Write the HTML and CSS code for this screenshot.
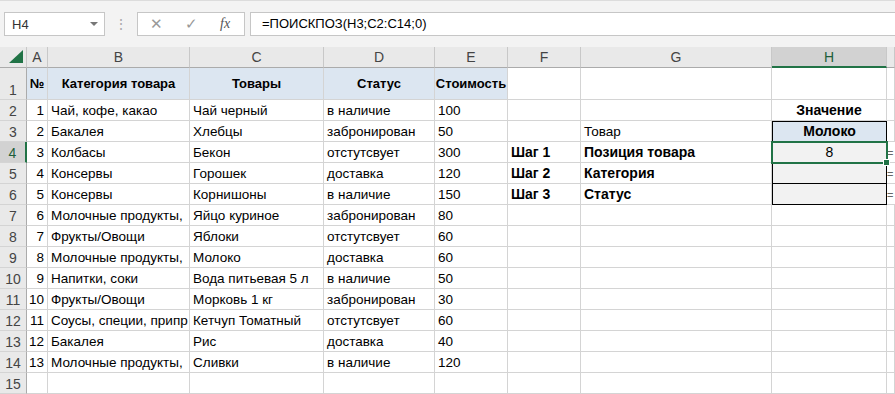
FILE: index.html
```html
<!DOCTYPE html>
<html lang="ru">
<head>
    <meta charset="UTF-8">
    <title>ПОИСКПОЗ</title>
    <link rel="stylesheet" href="styles.css">
</head>
<body>

    <div class="toolbar">
        <div class="namebox">
            <span>H4</span>
            <span class="arrow"></span>
        </div>
        <div class="dots">⋮</div>
        <div class="fxbox">
            <span class="btn">✕</span>
            <span class="btn">✓</span>
            <span class="fx">fx</span>
        </div>
        <div class="formula">=ПОИСКПОЗ(H3;C2:C14;0)</div>
    </div>

    <div class="sheet">
        <div class="row heads">
            <div class="corner"><span class="tri"></span></div>
            <div>A</div><div>B</div><div>C</div><div>D</div><div>E</div><div>F</div><div>G</div><div class="sel-col">H</div><div></div>
        </div>

        <div class="row tall">
            <div class="rn">1</div>
            <div class="hd">№</div>
            <div class="hd">Категория товара</div>
            <div class="hd">Товары</div>
            <div class="hd">Статус</div>
            <div class="hd">Стоимость</div>
            <div></div><div></div><div></div><div></div>
        </div>

        <div class="row">
            <div class="rn">2</div><div class="num">1</div><div>Чай, кофе, какао</div><div>Чай черный</div><div>в наличие</div><div>100</div>
            <div></div><div></div><div class="b center">Значение</div><div></div>
        </div>
        <div class="row">
            <div class="rn">3</div><div class="num">2</div><div>Бакалея</div><div>Хлебцы</div><div>забронирован</div><div>50</div>
            <div></div><div>Товар</div><div class="b center box blue">Молоко</div><div></div>
        </div>
        <div class="row">
            <div class="rn sel-row">4</div><div class="num">3</div><div>Колбасы</div><div>Бекон</div><div>отстутсвует</div><div>300</div>
            <div class="b">Шаг 1</div><div class="b">Позиция товара</div>
            <div class="center box grey active">8<span class="handle"></span></div><div class="eq">=</div>
        </div>
        <div class="row">
            <div class="rn">5</div><div class="num">4</div><div>Консервы</div><div>Горошек</div><div>доставка</div><div>120</div>
            <div class="b">Шаг 2</div><div class="b">Категория</div><div class="box grey"></div><div class="eq">=</div>
        </div>
        <div class="row">
            <div class="rn">6</div><div class="num">5</div><div>Консервы</div><div>Корнишоны</div><div>в наличие</div><div>150</div>
            <div class="b">Шаг 3</div><div class="b">Статус</div><div class="box grey"></div><div class="eq">=</div>
        </div>
        <div class="row">
            <div class="rn">7</div><div class="num">6</div><div>Молочные продукты,</div><div>Яйцо куриное</div><div>забронирован</div><div>80</div>
            <div></div><div></div><div></div><div></div>
        </div>
        <div class="row">
            <div class="rn">8</div><div class="num">7</div><div>Фрукты/Овощи</div><div>Яблоки</div><div>отстутсвует</div><div>60</div>
            <div></div><div></div><div></div><div></div>
        </div>
        <div class="row">
            <div class="rn">9</div><div class="num">8</div><div>Молочные продукты,</div><div>Молоко</div><div>доставка</div><div>60</div>
            <div></div><div></div><div></div><div></div>
        </div>
        <div class="row">
            <div class="rn">10</div><div class="num">9</div><div>Напитки, соки</div><div>Вода питьевая 5 л</div><div>в наличие</div><div>50</div>
            <div></div><div></div><div></div><div></div>
        </div>
        <div class="row">
            <div class="rn">11</div><div class="num">10</div><div>Фрукты/Овощи</div><div>Морковь 1 кг</div><div>забронирован</div><div>30</div>
            <div></div><div></div><div></div><div></div>
        </div>
        <div class="row">
            <div class="rn">12</div><div class="num">11</div><div>Соусы, специи, припр</div><div>Кетчуп Томатный</div><div>отстутсвует</div><div>60</div>
            <div></div><div></div><div></div><div></div>
        </div>
        <div class="row">
            <div class="rn">13</div><div class="num">12</div><div>Бакалея</div><div>Рис</div><div>доставка</div><div>40</div>
            <div></div><div></div><div></div><div></div>
        </div>
        <div class="row">
            <div class="rn">14</div><div class="num">13</div><div>Молочные продукты,</div><div>Сливки</div><div>в наличие</div><div>120</div>
            <div></div><div></div><div></div><div></div>
        </div>
        <div class="row">
            <div class="rn">15</div><div></div><div></div><div></div><div></div><div></div>
            <div></div><div></div><div></div><div></div>
        </div>
    </div>

</body>
</html>
```

FILE: styles.css
```css
body {
    margin: 0;
    font-family: 'Liberation Sans', Arial, sans-serif;
    font-size: 13.5px;
    color: #000;
    background-color: #fff;
    overflow: hidden;
}

/* formula bar */

.toolbar {
    display: flex;
    align-items: center;
    height: 47px;
    padding: 11px 0 11px 4px;
    box-sizing: border-box;
    background-color: #f3f3f3;
    border-top: 1px solid #dcdcdc;
}

.namebox {
    display: flex;
    align-items: center;
    justify-content: space-between;
    width: 101px;
    height: 24px;
    padding: 0 6px 0 7px;
    box-sizing: border-box;
    background-color: #fff;
    border: 1px solid #c6c6c6;
    color: #333;
    font-size: 13px;
}

.arrow {
    width: 0;
    height: 0;
    border-left: 4px solid transparent;
    border-right: 4px solid transparent;
    border-top: 4px solid #777;
}

.dots {
    width: 32px;
    text-align: center;
    color: #aaa;
    font-size: 14px;
}

.fxbox {
    display: flex;
    align-items: center;
    width: 108px;
    height: 24px;
    box-sizing: border-box;
    background-color: #fff;
    border: 1px solid #c6c6c6;
    padding-left: 12px;
    color: #999;
}

.btn {
    width: 35px;
    font-size: 15px;
}

.fx {
    margin-left: 0;
    font-family: 'Liberation Serif', serif;
    font-style: italic;
    font-size: 14px;
    color: #555;
}

.formula {
    flex: 1;
    height: 24px;
    margin-left: 5px;
    padding-left: 11px;
    box-sizing: border-box;
    line-height: 22px;
    background-color: #fff;
    border: 1px solid #c6c6c6;
    border-right: none;
    font-size: 13px;
}

/* grid */

.row {
    display: grid;
    grid-template-columns: 27px 21px 142px 134px 111px 73px 73px 191px 115px 8px;
    height: 21px;
}

.row > div {
    display: flex;
    align-items: flex-end;
    padding: 0 3px 2px 3px;
    box-sizing: border-box;
    border-right: 1px solid #d4d4d4;
    border-bottom: 1px solid #d4d4d4;
    white-space: nowrap;
    overflow: hidden;
    position: relative;
}

.row.tall {
    height: 32px;
}

.heads > div {
    justify-content: center;
    align-items: center;
    padding: 0;
    background-color: #e9e9e9;
    color: #444;
    font-size: 14px;
    border-right-color: #c8c8c8;
    border-bottom-color: #ababab;
}

.heads > .sel-col {
    background-color: #d2d2d2;
    color: #1e5e3a;
    border-bottom: 2px solid #217346;
}

.corner {
    position: relative;
}

.tri {
    position: absolute;
    right: 3px;
    bottom: 4px;
    width: 0;
    height: 0;
    border-left: 14px solid transparent;
    border-bottom: 13px solid #217346;
}

.row > .rn {
    justify-content: center;
    padding: 0 0 1px 0;
    background-color: #e9e9e9;
    color: #444;
    font-size: 14px;
    border-right-color: #ababab;
    border-bottom-color: #d4d4d4;
}

.row > .sel-row {
    background-color: #d2d2d2;
    color: #1e5e3a;
    border-right: 2px solid #217346;
}

.row > .hd {
    background-color: #dce6f1;
    font-size: 13px;
    font-weight: bold;
    justify-content: center;
    align-items: center;
    padding: 0 2px 1px 2px;
}

.row > .num {
    justify-content: flex-end;
}

.b {
    font-weight: bold;
    font-size: 14px;
}

.row > .center {
    justify-content: center;
}

.row > .box {
    border: 1px solid #000;
    border-top: none;
}

.row > .blue {
    background-color: #dce6f1;
    border-top: 1px solid #000;
}

.row > .grey {
    background-color: #f2f2f2;
}

.row > .active {
    overflow: visible;
    z-index: 1;
    font-size: 14px;
}

.active::before {
    content: "";
    position: absolute;
    left: -2px;
    top: -1px;
    right: -2px;
    bottom: -2px;
    border: 2px solid #217346;
}

.handle {
    position: absolute;
    right: -4px;
    bottom: -4px;
    width: 5px;
    height: 5px;
    background-color: #217346;
    border: 1px solid #fff;
}

.row > .eq {
    padding: 0 0 3px 0;
    font-size: 11px;
    color: #666;
    border-right: none;
}
```
